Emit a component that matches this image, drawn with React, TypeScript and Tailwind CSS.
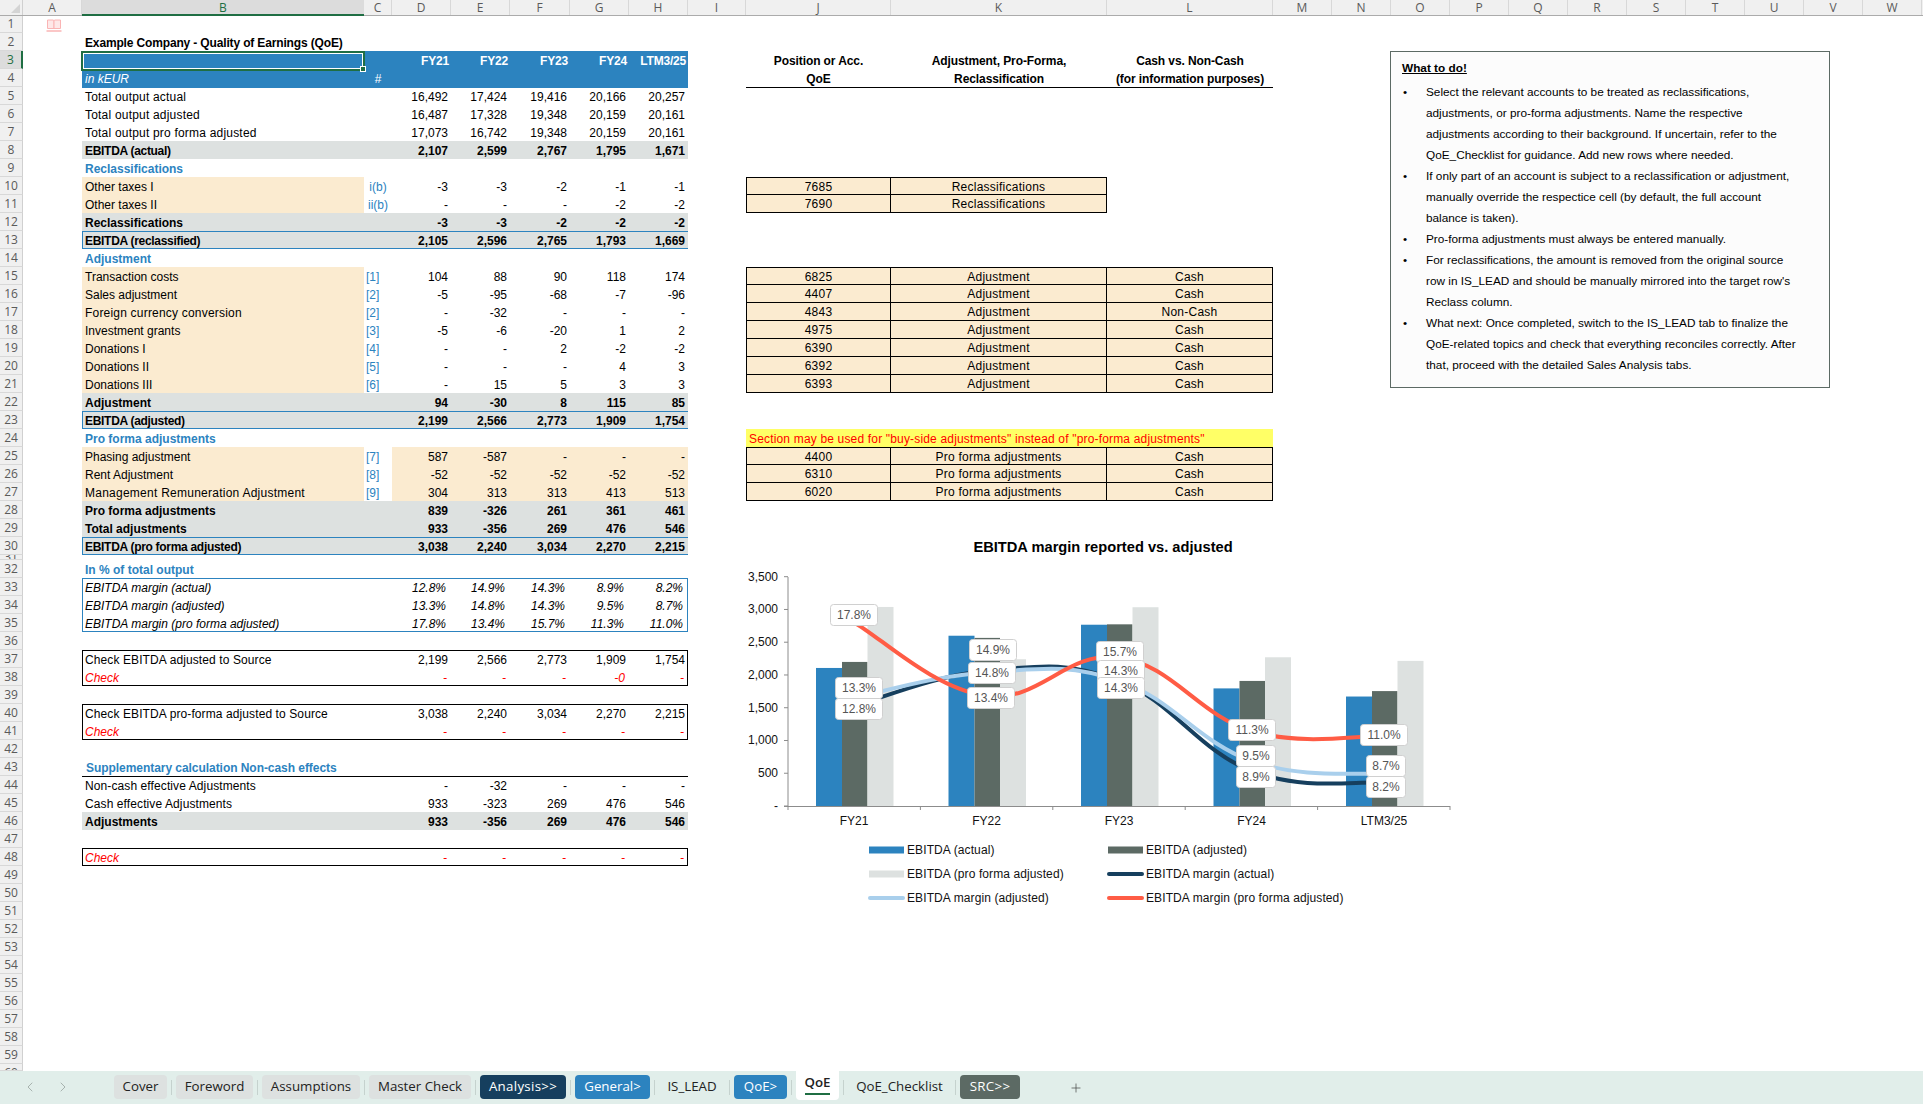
import React from 'react';
import { ChevronLeft, ChevronRight, Plus } from 'lucide-react';

type Kind = 'plain' | 'total' | 'head' | 'italic' | 'red' | 'band' | 'bandTop';

interface RowDef {
  label?: string;
  track?: string;
  ref?: string;
  vals?: string[];
  kind?: Kind;
  peach?: boolean;
  peachAll?: boolean;
  frame?: string;
  side?: string[];
  sideKind?: 'head' | 'first' | 'body';
}

const BLUE_TOPBOT = 'shadow-[inset_1px_1px_0_#2c83bf,inset_0_-1px_0_#2c83bf]';
const BLUE_TOP = 'shadow-[inset_1px_1px_0_#2c83bf,inset_-1px_0_0_#2c83bf]';
const BLUE_MID = 'shadow-[inset_1px_0_0_#2c83bf,inset_-1px_0_0_#2c83bf]';
const BLUE_BOT = 'shadow-[inset_1px_-1px_0_#2c83bf,inset_-1px_0_0_#2c83bf]';
const BLUE_BELOW = 'shadow-[0_1px_0_#2c83bf]';
const BLACK_TOP = 'shadow-[inset_1px_1px_0_#000,inset_-1px_0_0_#000]';
const BLACK_BOT = 'shadow-[inset_1px_-1px_0_#000,inset_-1px_0_0_#000]';
const BLACK_ALL = 'shadow-[inset_0_0_0_1px_#000]';
const UNDERLINE = 'shadow-[0_1px_0_#000]';

const WIDE = 'tracking-[0.2px]';
const NARROW = 'tracking-[-0.3px]';

const d = '-';

const rows: Record<number, RowDef> = {
  2: { label: 'Example Company - Quality of Earnings (QoE)', kind: 'bandTop', track: 'tracking-[-0.15px]' },
  3: { kind: 'band', vals: ['FY21', 'FY22', 'FY23', 'FY24', 'LTM3/25'], side: ['Position or Acc.', 'Adjustment, Pro-Forma,', 'Cash vs. Non-Cash'], sideKind: 'head' },
  4: { kind: 'band', label: 'in kEUR', ref: '#', frame: BLUE_BELOW, side: ['QoE', 'Reclassification', '(for information purposes)'], sideKind: 'head' },
  5: { label: 'Total output actual', track: WIDE, vals: ['16,492', '17,424', '19,416', '20,166', '20,257'] },
  6: { label: 'Total output adjusted', track: WIDE, vals: ['16,487', '17,328', '19,348', '20,159', '20,161'] },
  7: { label: 'Total output pro forma adjusted', track: WIDE, vals: ['17,073', '16,742', '19,348', '20,159', '20,161'] },
  8: { label: 'EBITDA (actual)', track: NARROW, kind: 'total', vals: ['2,107', '2,599', '2,767', '1,795', '1,671'] },
  9: { label: 'Reclassifications', kind: 'head' },
  10: { label: 'Other taxes I', ref: 'i(b)', peach: true, vals: ['-3', '-3', '-2', '-1', '-1'], side: ['7685', 'Reclassifications'], sideKind: 'first' },
  11: { label: 'Other taxes II', ref: 'ii(b)', peach: true, vals: [d, d, d, '-2', '-2'], side: ['7690', 'Reclassifications'], sideKind: 'body' },
  12: { label: 'Reclassifications', kind: 'total', vals: ['-3', '-3', '-2', '-2', '-2'] },
  13: { label: 'EBITDA (reclassified)', track: NARROW, kind: 'total', frame: BLUE_TOPBOT, vals: ['2,105', '2,596', '2,765', '1,793', '1,669'] },
  14: { label: 'Adjustment', kind: 'head' },
  15: { label: 'Transaction costs', ref: '[1]', peach: true, vals: ['104', '88', '90', '118', '174'], side: ['6825', 'Adjustment', 'Cash'], sideKind: 'first' },
  16: { label: 'Sales adjustment', ref: '[2]', peach: true, vals: ['-5', '-95', '-68', '-7', '-96'], side: ['4407', 'Adjustment', 'Cash'], sideKind: 'body' },
  17: { label: 'Foreign currency conversion', track: WIDE, ref: '[2]', peach: true, vals: [d, '-32', d, d, d], side: ['4843', 'Adjustment', 'Non-Cash'], sideKind: 'body' },
  18: { label: 'Investment grants', ref: '[3]', peach: true, vals: ['-5', '-6', '-20', '1', '2'], side: ['4975', 'Adjustment', 'Cash'], sideKind: 'body' },
  19: { label: 'Donations I', ref: '[4]', peach: true, vals: [d, d, '2', '-2', '-2'], side: ['6390', 'Adjustment', 'Cash'], sideKind: 'body' },
  20: { label: 'Donations II', ref: '[5]', peach: true, vals: [d, d, d, '4', '3'], side: ['6392', 'Adjustment', 'Cash'], sideKind: 'body' },
  21: { label: 'Donations III', ref: '[6]', peach: true, vals: [d, '15', '5', '3', '3'], side: ['6393', 'Adjustment', 'Cash'], sideKind: 'body' },
  22: { label: 'Adjustment', kind: 'total', vals: ['94', '-30', '8', '115', '85'] },
  23: { label: 'EBITDA (adjusted)', track: NARROW, kind: 'total', frame: BLUE_TOPBOT, vals: ['2,199', '2,566', '2,773', '1,909', '1,754'] },
  24: { label: 'Pro forma adjustments', kind: 'head' },
  25: { label: 'Phasing adjustment', ref: '[7]', peach: true, peachAll: true, vals: ['587', '-587', d, d, d], side: ['4400', 'Pro forma adjustments', 'Cash'], sideKind: 'first' },
  26: { label: 'Rent Adjustment', ref: '[8]', peach: true, peachAll: true, vals: ['-52', '-52', '-52', '-52', '-52'], side: ['6310', 'Pro forma adjustments', 'Cash'], sideKind: 'body' },
  27: { label: 'Management Remuneration Adjustment', track: 'tracking-[0.25px]', ref: '[9]', peach: true, peachAll: true, vals: ['304', '313', '313', '413', '513'], side: ['6020', 'Pro forma adjustments', 'Cash'], sideKind: 'body' },
  28: { label: 'Pro forma adjustments', kind: 'total', vals: ['839', '-326', '261', '361', '461'] },
  29: { label: 'Total adjustments', kind: 'total', vals: ['933', '-356', '269', '476', '546'] },
  30: { label: 'EBITDA (pro forma adjusted)', track: NARROW, kind: 'total', frame: BLUE_TOPBOT, vals: ['3,038', '2,240', '3,034', '2,270', '2,215'] },
  32: { label: 'In % of total output', kind: 'head' },
  33: { label: 'EBITDA margin (actual)', kind: 'italic', frame: BLUE_TOP, vals: ['12.8%', '14.9%', '14.3%', '8.9%', '8.2%'] },
  34: { label: 'EBITDA margin (adjusted)', kind: 'italic', frame: BLUE_MID, vals: ['13.3%', '14.8%', '14.3%', '9.5%', '8.7%'] },
  35: { label: 'EBITDA margin (pro forma adjusted)', kind: 'italic', frame: BLUE_BOT, vals: ['17.8%', '13.4%', '15.7%', '11.3%', '11.0%'] },
  37: { label: 'Check EBITDA adjusted to Source', track: 'tracking-[0.1px]', frame: BLACK_TOP, vals: ['2,199', '2,566', '2,773', '1,909', '1,754'] },
  38: { label: 'Check', kind: 'red', frame: BLACK_BOT, vals: [d, d, d, '-0', d] },
  40: { label: 'Check EBITDA pro-forma adjusted to Source', track: 'tracking-[0.1px]', frame: BLACK_TOP, vals: ['3,038', '2,240', '3,034', '2,270', '2,215'] },
  41: { label: 'Check', kind: 'red', frame: BLACK_BOT, vals: [d, d, d, d, d] },
  43: { label: 'Supplementary calculation Non-cash effects', kind: 'head', frame: UNDERLINE, track: 'tracking-[-0.05px]' },
  44: { label: 'Non-cash effective Adjustments', track: 'tracking-[0.1px]', vals: [d, '-32', d, d, d] },
  45: { label: 'Cash effective Adjustments', track: 'tracking-[0.1px]', vals: ['933', '-323', '269', '476', '546'] },
  46: { label: 'Adjustments', kind: 'total', vals: ['933', '-356', '269', '476', '546'] },
  48: { label: 'Check', kind: 'red', frame: BLACK_ALL, vals: [d, d, d, d, d] },
};

const valWidths = ['w-[59px]', 'w-[59px]', 'w-[60px]', 'w-[59px]', 'w-[59px]'];

const columnHeads: [string, string][] = [
  ['A', 'w-[59px]'], ['B', 'w-[282px]'], ['C', 'w-[28px]'], ['D', 'w-[59px]'], ['E', 'w-[59px]'], ['F', 'w-[60px]'],
  ['G', 'w-[59px]'], ['H', 'w-[59px]'], ['I', 'w-[58px]'], ['J', 'w-[145px]'], ['K', 'w-[216px]'], ['L', 'w-[166px]'],
  ['M', 'w-[59px]'], ['N', 'w-[59px]'], ['O', 'w-[59px]'], ['P', 'w-[59px]'], ['Q', 'w-[59px]'], ['R', 'w-[59px]'],
  ['S', 'w-[59px]'], ['T', 'w-[59px]'], ['U', 'w-[59px]'], ['V', 'w-[59px]'], ['W', 'w-[59px]'],
];

function ColumnHeader() {
  return (
    <div className="flex h-[16px] bg-[#f0f0f0] border-b border-[#ababab] font-['Open_Sans',sans-serif] text-[12px] leading-[15px] text-[#5a5a5a]">
      <div className="w-[23px] border-r border-[#d0d0d0] flex items-end justify-end">
        <div className="w-0 h-0 mb-[2px] mr-[2px] border-l-[9px] border-l-transparent border-b-[9px] border-b-[#d4d4d4]" />
      </div>
      {columnHeads.map(([name, width]) =>
        name === 'B' ? (
          <div key={name} className={`${width} text-center bg-[#dcdcdc] text-[#1f6e43] h-[16px] border-b-2 border-[#1f6e43]`}>{name}</div>
        ) : (
          <div key={name} className={`${width} text-center border-r border-[#d8d8d8]`}>{name}</div>
        )
      )}
    </div>
  );
}

function RowHead({ n }: { n: number }) {
  const selected = n === 3;
  return (
    <div
      className={`w-[23px] shrink-0 flex justify-center overflow-hidden font-['Open_Sans',sans-serif] text-[12px] leading-[18px] border-b border-[#d8d8d8] ${
        n === 60 ? 'items-start' : 'items-center'
      } ${selected ? 'bg-[#dcdcdc] text-[#1f6e43] border-r-2 border-r-[#1f6e43]' : 'bg-[#f0f0f0] text-[#5a5a5a] border-r border-r-[#d0d0d0]'}`}
    >
      {n}
    </div>
  );
}

function BookIcon() {
  return (
    <svg width="16" height="13" viewBox="0 0 16 13" className="ml-[23px] mt-[2px]" fill="#fee8e8" stroke="#fab4b4" strokeWidth="1">
      <path d="M1.5 1h5.5c.6 0 1 .4 1 1v7.5H1.5z" />
      <path d="M14.5 1H9c-.6 0-1 .4-1 1v7.5h6.5z" />
      <path d="M0.5 12h15" strokeWidth="1.5" />
    </svg>
  );
}

function Side({ row }: { row: RowDef }) {
  if (!row.side) return null;
  const widths = ['w-[145px]', 'w-[216px]', 'w-[166px]'];
  if (row.sideKind === 'head') {
    return (
      <div className={`flex font-bold h-[18px] ${row.side[0] === 'QoE' ? UNDERLINE : ''}`}>
        {row.side.map((text, i) => (
          <div key={i} className={`${widths[i]} text-center tracking-[-0.1px] leading-[20px]`}>{text}</div>
        ))}
      </div>
    );
  }
  return (
    <div className="flex">
      {row.side.map((text, i) => (
        <div
          key={i}
          className={`${widths[i]} h-[18px] text-center tracking-[0.25px] bg-[#fbebd0] border-b border-r border-black ${i === 0 ? 'border-l' : ''} ${
            row.sideKind === 'first' ? 'border-t leading-[18px]' : 'leading-[19px]'
          }`}
        >
          {text}
        </div>
      ))}
    </div>
  );
}

function SheetRow({ n }: { n: number }) {
  const row = rows[n] ?? {};
  const kind = row.kind ?? 'plain';
  const fill = kind === 'total' ? 'bg-[#dde1e0] font-bold' : kind === 'band' ? 'bg-[#2c83bf] text-white' : '';
  const height = n === 31 ? 'h-[5px]' : n === 60 ? 'h-[7px]' : n === 1 ? 'h-[17px]' : 'h-[18px]';
  let labelStyle = '';
  if (kind === 'head') labelStyle = 'text-[#2c83bf] font-bold';
  if (kind === 'italic' || kind === 'band') labelStyle = 'italic';
  if (kind === 'red') labelStyle = 'italic text-[#ff0000]';
  if (kind === 'bandTop') labelStyle = 'font-bold whitespace-nowrap';
  let numberStyle = 'pr-[3px]';
  if (kind === 'band') numberStyle = 'font-bold pr-[2px] tracking-[-0.2px]';
  if (kind === 'italic') numberStyle = 'italic pr-[5px]';
  if (kind === 'red') numberStyle = 'italic pr-[4px] text-[#ff0000]';
  return (
    <div className={`flex ${height}`}>
      <RowHead n={n} />
      <div className="w-[59px] shrink-0 flex items-center">{n === 1 && <BookIcon />}</div>
      <div className={`w-[606px] shrink-0 flex leading-[20px] ${fill} ${row.frame ?? ''}`}>
        <div className={`w-[282px] whitespace-nowrap ${n === 43 ? 'pl-[4px]' : 'pl-[3px]'} ${row.peach ? 'bg-[#fbebd0]' : ''} ${labelStyle} ${row.track ?? ''}`}>{row.label}</div>
        <div className={`w-[28px] ${kind === 'band' ? 'text-center' : 'text-[#2c83bf]'} ${row.ref?.startsWith('[') ? 'pl-[2px]' : 'text-center'}`}>{row.ref}</div>
        {row.vals?.map((v, i) => (
          <div key={i} className={`${valWidths[i]} text-right ${numberStyle} ${row.peachAll ? 'bg-[#fbebd0]' : ''}`}>
            {v}
          </div>
        ))}
      </div>
      <div className="w-[58px] shrink-0" />
      {n === 24 ? (
        <div className="w-[527px] bg-[#ffff66] text-[#ff0000] pl-[3px] leading-[20px] tracking-[0.17px]">
          Section may be used for "buy-side adjustments" instead of "pro-forma adjustments"
        </div>
      ) : (
        <Side row={row} />
      )}
    </div>
  );
}

// chart ----------------------------------------------------------------
const CATS = ['FY21', 'FY22', 'FY23', 'FY24', 'LTM3/25'];
const CENTERS = [854, 986.5, 1119, 1251.5, 1384];
const BASE = 806;
const SCALE = 229.3 / 3500;

const barActual = [2107, 2599, 2767, 1795, 1671];
const barAdjusted = [2199, 2566, 2773, 1909, 1754];
const barProForma = [3038, 2240, 3034, 2270, 2215];

const marginActual = [12.8, 14.9, 14.3, 8.9, 8.2];
const marginAdjusted = [13.3, 14.8, 14.3, 9.5, 8.7];
const marginProForma = [17.8, 13.4, 15.7, 11.3, 11.0];

const marginY = (v: number) => 782.7 - (v - 8.2) * 16.7;

function smoothPath(values: number[]) {
  const pts = values.map((v, i) => [CENTERS[i], marginY(v)]);
  let path = `M${pts[0][0]} ${pts[0][1]}`;
  for (let i = 0; i < pts.length - 1; i++) {
    const p0 = pts[i - 1] ?? pts[i];
    const p1 = pts[i];
    const p2 = pts[i + 1];
    const p3 = pts[i + 2] ?? p2;
    const c1x = p1[0] + (p2[0] - p0[0]) / 5;
    const c1y = p1[1] + (p2[1] - p0[1]) / 5;
    const c2x = p2[0] - (p3[0] - p1[0]) / 5;
    const c2y = p2[1] - (p3[1] - p1[1]) / 5;
    path += ` C${c1x} ${c1y} ${c2x} ${c2y} ${p2[0]} ${p2[1]}`;
  }
  return path;
}

const dataLabels: [string, number, number, number][] = [
  ['17.8%', 854, 615, 47],
  ['13.3%', 859, 688, 47],
  ['12.8%', 859, 709, 47],
  ['14.9%', 993, 650, 47],
  ['14.8%', 992, 673, 47],
  ['13.4%', 991, 698, 47],
  ['15.7%', 1120, 652, 47],
  ['14.3%', 1121, 671, 47],
  ['14.3%', 1121, 688, 47],
  ['11.3%', 1252, 730, 47],
  ['9.5%', 1256, 756, 39],
  ['8.9%', 1256, 777, 39],
  ['11.0%', 1384, 735, 47],
  ['8.7%', 1386, 766, 39],
  ['8.2%', 1386, 787, 39],
];

function Chart() {
  return (
    <svg
      className="absolute left-[730px] top-[530px] font-['Liberation_Sans',Arial,sans-serif]"
      width="750"
      height="400"
      viewBox="730 530 750 400"
    >
      <text x="1103" y="552" textAnchor="middle" fontSize="14.67" fontWeight="700" fill="#000">EBITDA margin reported vs. adjusted</text>

      {[0, 500, 1000, 1500, 2000, 2500, 3000, 3500].map((v) => {
        const y = BASE - v * SCALE;
        return (
          <g key={v}>
            <line x1="784" x2="788" y1={y} y2={y} stroke="#8c8c8c" />
            <text x="778" y={y + 4} textAnchor="end" fontSize="12" fill="#111">
              {v === 0 ? '-' : v.toLocaleString('en-US')}
            </text>
          </g>
        );
      })}

      {CENTERS.map((c, i) => (
        <g key={c}>
          <rect x={c - 38} y={BASE - barActual[i] * SCALE} width="26" height={barActual[i] * SCALE} fill="#2c83bf" />
          <rect x={c - 12} y={BASE - barAdjusted[i] * SCALE} width="25.5" height={barAdjusted[i] * SCALE} fill="#5c6a64" />
          <rect x={c + 13.5} y={BASE - barProForma[i] * SCALE} width="26" height={barProForma[i] * SCALE} fill="#dde1e0" />
          <text x={c} y="825" textAnchor="middle" fontSize="12" fill="#111">{CATS[i]}</text>
        </g>
      ))}

      <line x1="788" x2="788" y1="577" y2="806" stroke="#8c8c8c" />
      <line x1="784" x2="1450" y1="806.5" y2="806.5" stroke="#8c8c8c" />
      {[788, 920.4, 1052.8, 1185.2, 1317.6, 1450].map((x) => (
        <line key={x} x1={x} x2={x} y1="806" y2="810" stroke="#8c8c8c" />
      ))}

      <path d={smoothPath(marginActual)} fill="none" stroke="#163f5e" strokeWidth="4" strokeLinecap="round" />
      <path d={smoothPath(marginAdjusted)} fill="none" stroke="#a9cfec" strokeWidth="4" strokeLinecap="round" />
      <path d={smoothPath(marginProForma)} fill="none" stroke="#ff5c45" strokeWidth="4" strokeLinecap="round" />

      {dataLabels.map(([text, x, y, w], i) => (
        <g key={i}>
          <rect x={x - w / 2} y={y - 10.5} width={w} height="21" rx="3" fill="#fff" stroke="#d0d0d0" />
          <text x={x} y={y + 4} textAnchor="middle" fontSize="12" fill="#555">{text}</text>
        </g>
      ))}

      <Legend x={869} y={850} color="#2c83bf" text="EBITDA (actual)" />
      <Legend x={1108} y={850} color="#5c6a64" text="EBITDA (adjusted)" />
      <Legend x={869} y={874} color="#dde1e0" text="EBITDA (pro forma adjusted)" />
      <Legend x={1108} y={874} color="#163f5e" text="EBITDA margin (actual)" line />
      <Legend x={869} y={898} color="#a9cfec" text="EBITDA margin (adjusted)" line />
      <Legend x={1108} y={898} color="#ff5c45" text="EBITDA margin (pro forma adjusted)" line />
    </svg>
  );
}

function Legend({ x, y, color, text, line }: { x: number; y: number; color: string; text: string; line?: boolean }) {
  return (
    <g>
      {line ? (
        <line x1={x + 1} x2={x + 34} y1={y} y2={y} stroke={color} strokeWidth="4" strokeLinecap="round" />
      ) : (
        <rect x={x} y={y - 3.5} width="35" height="7" fill={color} />
      )}
      <text x={x + 38} y={y + 4} fontSize="12" fill="#111" className="tracking-[0.1px]">{text}</text>
    </g>
  );
}

// note box -------------------------------------------------------------
const notes = [
  [
    'Select the relevant accounts to be treated as reclassifications,',
    'adjustments, or pro-forma adjustments. Name the respective',
    'adjustments according to their background. If uncertain, refer to the',
    'QoE_Checklist for guidance. Add new rows where needed.',
  ],
  [
    'If only part of an account is subject to a reclassification or adjustment,',
    'manually override the respectice cell (by default, the full account',
    'balance is taken).',
  ],
  ['Pro-forma adjustments must always be entered manually.'],
  [
    'For reclassifications, the amount is removed from the original source',
    "row in IS_LEAD and should be manually mirrored into the target row's",
    'Reclass column.',
  ],
  [
    'What next: Once completed, switch to the IS_LEAD tab to finalize the',
    'QoE-related topics and check that everything reconciles correctly. After',
    'that, proceed with the detailed Sales Analysis tabs.',
  ],
];

function NoteBox() {
  return (
    <div className="absolute left-[1390px] top-[51px] w-[440px] h-[337px] border border-[#5c6a64] bg-[#fcfcfc] pl-[11px] pt-[6px] text-[11.8px] leading-[21px] text-black">
      <div className="font-bold underline mb-[3px]">What to do!</div>
      {notes.map((lines, i) => (
        <div key={i} className="flex">
          <div className="w-[24px] shrink-0 pl-[1px]">•</div>
          <div>
            {lines.map((l) => (
              <div key={l} className="whitespace-nowrap">{l}</div>
            ))}
          </div>
        </div>
      ))}
    </div>
  );
}

// tab bar --------------------------------------------------------------
const tabs: { name: string; width: string; style: string }[] = [
  { name: 'Cover', width: 'w-[53px]', style: 'bg-[#dde1e0] text-[#222]' },
  { name: 'Foreword', width: 'w-[77px]', style: 'bg-[#dde1e0] text-[#222]' },
  { name: 'Assumptions', width: 'w-[98px]', style: 'bg-[#dde1e0] text-[#222]' },
  { name: 'Master Check', width: 'w-[102px]', style: 'bg-[#dde1e0] text-[#222]' },
  { name: 'Analysis>>', width: 'w-[86px]', style: 'bg-[#163f5e] text-white tracking-[0.3px]' },
  { name: 'General>', width: 'w-[75px]', style: 'bg-[#2c83bf] text-white' },
  { name: 'IS_LEAD', width: 'w-[66px]', style: 'text-[#222]' },
  { name: 'QoE>', width: 'w-[53px]', style: 'bg-[#2c83bf] text-white' },
  { name: 'QoE', width: 'w-[43px]', style: 'active' },
  { name: 'QoE_Checklist', width: 'w-[103px]', style: 'text-[#222]' },
  { name: 'SRC>>', width: 'w-[60px]', style: 'bg-[#5c6a64] text-white tracking-[0.3px]' },
];

function TabBar() {
  return (
    <div className="h-[33px] bg-[#e1eeea] flex items-start pl-[20px] font-['Open_Sans',sans-serif] text-[13.3px]">
      <div className="w-[94px] h-full flex items-center text-[#8a9490] pb-[2px]">
        <ChevronLeft className="w-[16px] h-[16px] ml-[2px]" strokeWidth={1} />
        <ChevronRight className="w-[16px] h-[16px] ml-[17px]" strokeWidth={1} />
      </div>
      {tabs.map((t, i) => (
        <React.Fragment key={t.name}>
          {t.style === 'active' ? (
            <div className={`${t.width} h-[29px] bg-white rounded-b-[4px] flex flex-col items-center font-semibold text-[#222] pt-[2px]`}>
              <span className="leading-[18px]">{t.name}</span>
              <span className="w-[25px] h-[2px] bg-[#1f6e43] mt-[2px]" />
            </div>
          ) : (
            <div className={`${t.width} h-[24px] mt-[4px] rounded-[4px] flex items-center justify-center whitespace-nowrap ${t.style}`}>{t.name}</div>
          )}
          {i < tabs.length - 1 && <div className="w-[9px] flex justify-center mt-[9px]"><div className="w-px h-[15px] bg-[#c5d2ce]" /></div>}
        </React.Fragment>
      ))}
      <Plus className="w-[14px] h-[14px] ml-[49px] mt-[10px] text-[#444]" strokeWidth={1.2} />
    </div>
  );
}

export default function App() {
  const rowNumbers = Array.from({ length: 60 }, (_, i) => i + 1);
  return (
    <div className="relative w-[1923px] h-[1104px] overflow-hidden bg-white flex flex-col font-['Liberation_Sans',Arial,sans-serif] text-[12px] text-black">
      <ColumnHeader />
      <div className="flex-1 overflow-hidden">
        {rowNumbers.map((n) => (
          <SheetRow key={n} n={n} />
        ))}
      </div>
      <TabBar />

      {/* selected cell B3 */}
      <div className="absolute left-[81px] top-[51px] w-[284px] h-[20px] border-2 border-[#1f6e43]">
        <div className="w-full h-full border border-white" />
        <div className="absolute right-[-3px] bottom-[-3px] w-[6px] h-[6px] bg-[#1f6e43] border border-white" />
      </div>

      <Chart />
      <NoteBox />
    </div>
  );
}
